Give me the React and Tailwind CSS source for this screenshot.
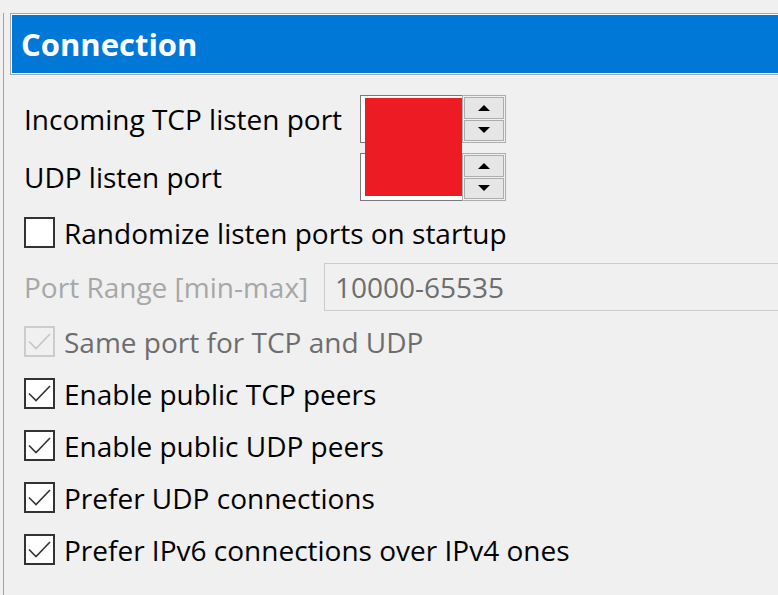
import React from "react";

const font = { fontFamily: '"Open Sans", "Noto Sans", sans-serif' };

function Check({ disabled }) {
  return (
    <svg width="31" height="31" viewBox="0 0 31 31" className="shrink-0">
      <rect x="1" y="1" width="29" height="29" fill={disabled ? "#f0f0f0" : "#ffffff"} stroke={disabled ? "#cccccc" : "#333333"} strokeWidth="2" />
      <polyline points="5,15.5 12,22.5 26,8" fill="none" stroke={disabled ? "#c5c5c5" : "#333333"} strokeWidth="1.6" />
    </svg>
  );
}

function Empty() {
  return (
    <svg width="31" height="31" viewBox="0 0 31 31" className="shrink-0">
      <rect x="1" y="1" width="29" height="29" fill="#ffffff" stroke="#333333" strokeWidth="2" />
    </svg>
  );
}

function Spin() {
  return (
    <div className="flex h-[48px] w-[146px]">
      <div className="flex-1 border border-r-0 border-[#7a7a7a] bg-white" />
      <div className="flex w-[44px] flex-col border border-[#adadad] p-px gap-px bg-[#f0f0f0]">
        <div className="flex flex-1 items-center justify-center border border-[#adadad] bg-[#e6e6e6]">
          <svg width="12" height="6" viewBox="0 0 12 6"><polygon points="0,6 12,6 6,0" fill="#000" /></svg>
        </div>
        <div className="flex flex-1 items-center justify-center border border-[#adadad] bg-[#e6e6e6]">
          <svg width="12" height="6" viewBox="0 0 12 6"><polygon points="0,0 12,0 6,6" fill="#000" /></svg>
        </div>
      </div>
    </div>
  );
}

function CheckRow({ children, checked = true, disabled, className = "" }) {
  return (
    <div className={"flex h-[31px] items-center gap-[9px] " + className}>
      {checked ? <Check disabled={disabled} /> : <Empty />}
      <span className={"whitespace-nowrap text-[28px] leading-none " + (disabled ? "text-[#6d6d6d]" : "text-black")}>{children}</span>
    </div>
  );
}

export default function App() {
  return (
    <div className="relative h-[595px] w-[778px] overflow-hidden bg-[#f0f0f0] pl-[3px]" style={font}>
      <div className="h-full border-l border-[#a0a0a0]">
        <div className="ml-[6px] mt-[13px] w-[800px] border border-[#a8a8a8] p-px bg-white">
          <div className="flex h-[58px] items-center bg-[#0078d7] pl-[9px]">
            <span className="text-[31px] font-bold leading-none text-white">Connection</span>
          </div>
        </div>

        <div className="flex flex-col pl-[20px]">
          <div className="mt-[20px] flex h-[48px] items-center">
            <span className="w-[336px] whitespace-nowrap text-[28px] leading-none">Incoming TCP listen port</span>
            <Spin />
          </div>
          <div className="mt-[10px] flex h-[48px] items-center">
            <span className="w-[336px] whitespace-nowrap text-[28px] leading-none">UDP listen port</span>
            <Spin />
          </div>

          <CheckRow checked={false} className="mt-[16px]">Randomize listen ports on startup</CheckRow>

          <div className="mt-[15px] flex h-[48px] items-center">
            <span className="w-[300px] shrink-0 whitespace-nowrap text-[28px] leading-none text-[#a7a7a7]">Port Range [min-max]</span>
            <div className="flex h-full w-[500px] shrink-0 items-center border border-[#cccccc] pl-[10px]">
              <span className="text-[28px] leading-none text-[#6d6d6d]">10000-65535</span>
            </div>
          </div>

          <CheckRow disabled className="mt-[15px]">Same port for TCP and UDP</CheckRow>
          <CheckRow className="mt-[21px]">Enable public TCP peers</CheckRow>
          <CheckRow className="mt-[21px]">Enable public UDP peers</CheckRow>
          <CheckRow className="mt-[21px]">Prefer UDP connections</CheckRow>
          <CheckRow className="mt-[21px]">Prefer IPv6 connections over IPv4 ones</CheckRow>
        </div>
      </div>
      <div className="absolute left-[365px] top-[98px] h-[98px] w-[97px] bg-[#ed1c24]" />
    </div>
  );
}
